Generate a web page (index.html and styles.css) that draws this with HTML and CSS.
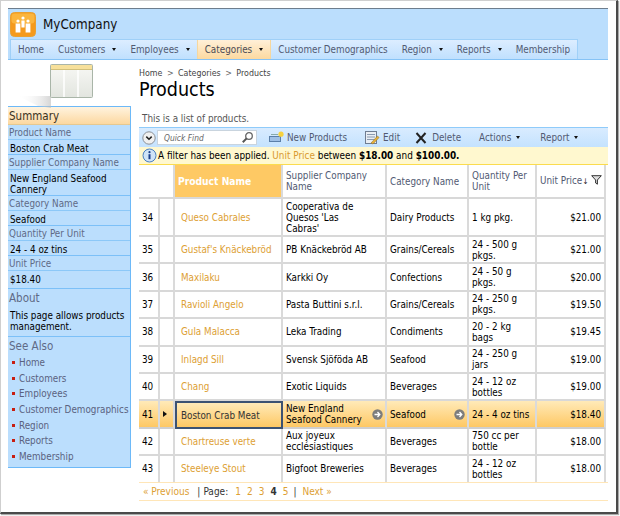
FILE: index.html
```html
<!DOCTYPE html>
<html lang="en">
<head>
<meta charset="utf-8">
<title>Products</title>
<link rel="stylesheet" href="styles.css">
</head>
<body>
<div class="frame">
  <header class="top">
    <div class="brand">
      <span class="logo">
        <svg width="26" height="25" viewBox="0 0 26 25"><rect x="0.5" y="0.5" width="25" height="24" rx="4" fill="#f59a1c" stroke="#e8a033"/><rect x="1.5" y="1.5" width="23" height="10" rx="3" fill="#fbb53e"/><g fill="#fff"><circle cx="8" cy="9" r="1.6"/><rect x="5.6" y="11.5" width="4.8" height="9"/><circle cx="13" cy="6" r="1.6"/><rect x="11.4" y="8.5" width="3.2" height="7"/><circle cx="18" cy="9" r="1.6"/><rect x="15.6" y="11.5" width="4.8" height="9"/></g></svg>
      </span>
      <span class="brand-name">MyCompany</span>
    </div>
    <nav class="menu">
      <span class="mi mi-first">Home</span>
      <span class="mi">Customers<i class="caret"></i></span>
      <span class="mi">Employees<i class="caret"></i></span>
      <span class="mi mi-active">Categories<i class="caret"></i></span>
      <span class="mi">Customer Demographics</span>
      <span class="mi">Region<i class="caret"></i></span>
      <span class="mi">Reports<i class="caret"></i></span>
      <span class="mi">Membership</span>
    </nav>
  </header>
  <div class="columns">
    <aside class="side">
      <div class="hero">
        <svg width="90" height="46" viewBox="0 0 90 46"><defs><linearGradient id="g1" x1="0" y1="0" x2="0" y2="1"><stop offset="0" stop-color="#f8f8f5"/><stop offset="1" stop-color="#e2e5df"/></linearGradient><linearGradient id="g2" x1="0" y1="0" x2="1" y2="0"><stop offset="0" stop-color="#fff" stop-opacity="0"/><stop offset="1" stop-color="#bbb"/></linearGradient></defs><polygon points="10,32 43,32 43,44 30,42" fill="url(#g2)" opacity=".6"/><rect x="42.5" y="0.5" width="42" height="33" rx="1" fill="url(#g1)" stroke="#a9b5a8"/><rect x="43" y="1" width="41" height="4.5" fill="#f7e09a"/><path d="M43 5.5h41" stroke="#d2c07a"/><path d="M56 6v27M70 6v27" stroke="#fff" stroke-width="1.5"/></svg>
      </div>
      <div class="panel">
        <h2 class="panel-title">Summary</h2>
        <div class="f-label f-h1">Product Name</div>
        <div class="f-value">Boston Crab Meat</div>
        <div class="f-label">Supplier Company Name</div>
        <div class="f-value">New England Seafood Cannery</div>
        <div class="f-label">Category Name</div>
        <div class="f-value">Seafood</div>
        <div class="f-label">Quantity Per Unit</div>
        <div class="f-value">24 - 4 oz tins</div>
        <div class="f-label">Unit Price</div>
        <div class="f-value f-last">$18.40</div>
        <h3 class="sec-title">About</h3>
        <p class="about">This page allows products management.</p>
        <h3 class="sec-title">See Also</h3>
        <ul class="links">
          <li>Home</li>
          <li>Customers</li>
          <li>Employees</li>
          <li>Customer Demographics</li>
          <li>Region</li>
          <li>Reports</li>
          <li>Membership</li>
        </ul>
      </div>
    </aside>
    <main class="main">
      <div class="crumbs">Home <span class="sep">&gt;</span> Categories <span class="sep">&gt;</span> Products</div>
      <h1 class="title">Products</h1>
      <p class="desc">This is a list of products.</p>
      <div class="toolbar">
        <span class="round">
          <svg width="14" height="14" viewBox="0 0 14 14"><circle cx="7" cy="7" r="6.2" fill="#f0f0f0" stroke="#8a8f96"/><path d="M4.3 5.6 7 8.3l2.7-2.7" fill="none" stroke="#222" stroke-width="1.5"/></svg>
        </span>
        <span class="qf"><em>Quick Find</em>
          <svg width="13" height="13" viewBox="0 0 13 13"><circle cx="8" cy="5" r="3.3" fill="#fff" stroke="#666" stroke-width="1.3"/><path d="M5.6 7.4 1.8 11.2" stroke="#555" stroke-width="2"/></svg>
        </span>
        <span class="tb tb-new">
          <svg width="15" height="13" viewBox="0 0 15 13"><rect x="0.5" y="5.5" width="11" height="5" fill="#9fc0e6" stroke="#5b7fa8"/><path d="M2 3.5h7" stroke="#8aa" /><circle cx="12" cy="3.2" r="2.6" fill="#f7d23e"/></svg>
          New Products</span>
        <span class="tb tb-edit">
          <svg width="15" height="14" viewBox="0 0 15 14"><rect x="0.5" y="0.5" width="11" height="12" fill="#e9eef4" stroke="#6f7d92"/><path d="M2 3.5h8M2 6h8M2 8.5h8" stroke="#8a9ab0"/><path d="M6 12 12.5 5l1.6 1.5L8 13z" fill="#e8b23a" stroke="#8a6a20" stroke-width=".5"/></svg>
          Edit</span>
        <span class="tb tb-del">
          <svg width="12" height="12" viewBox="0 0 12 12"><path d="M1.5 1 10.5 11M10.5 1 1.5 11" stroke="#222" stroke-width="2"/></svg>
          Delete</span>
        <span class="tb tb-act">Actions<i class="caret"></i></span>
        <span class="tb tb-rep">Report<i class="caret"></i></span>
      </div>
      <div class="filter">
        <svg width="15" height="15" viewBox="0 0 15 15"><circle cx="7.5" cy="7.5" r="6.5" fill="#cfe3f8" stroke="#4a7fc0"/><rect x="6.5" y="6.2" width="2" height="5" fill="#1c3f8a"/><circle cx="7.5" cy="4.2" r="1.1" fill="#1c3f8a"/></svg>
        <span>A filter has been applied. <span class="hl">Unit Price</span> between <b>$18.00</b> and <b>$100.00.</b></span>
      </div>
      <table class="grid">
        <colgroup><col class="c1"><col class="c2"><col class="c3"><col class="c4"><col class="c5"><col class="c6"><col class="c7"></colgroup>
        <thead>
          <tr>
            <th colspan="2"></th>
            <th class="sorted">Product Name</th>
            <th>Supplier Company Name</th>
            <th>Category Name</th>
            <th>Quantity Per Unit</th>
            <th class="th-price">Unit Price<span class="down">↓</span><svg class="funnel" width="11" height="10" viewBox="0 0 11 10"><path d="M0.7 0.7h9.6L6.4 5v4.2L4.6 8V5z" fill="#ddd" stroke="#333"/></svg></th>
          </tr>
        </thead>
        <tbody>
          <tr class="r3"><td class="num">34</td><td></td><td class="pn">Queso Cabrales</td><td class="sup">Cooperativa de Quesos 'Las Cabras'</td><td>Dairy Products</td><td>1 kg pkg.</td><td class="pr">$21.00</td></tr>
          <tr><td class="num">35</td><td></td><td class="pn">Gustaf's Knäckebröd</td><td class="sup">PB Knäckebröd AB</td><td>Grains/Cereals</td><td>24 - 500 g pkgs.</td><td class="pr">$21.00</td></tr>
          <tr><td class="num">36</td><td></td><td class="pn">Maxilaku</td><td class="sup">Karkki Oy</td><td>Confections</td><td>24 - 50 g pkgs.</td><td class="pr">$20.00</td></tr>
          <tr><td class="num">37</td><td></td><td class="pn">Ravioli Angelo</td><td class="sup">Pasta Buttini s.r.l.</td><td>Grains/Cereals</td><td>24 - 250 g pkgs.</td><td class="pr">$19.50</td></tr>
          <tr><td class="num">38</td><td></td><td class="pn">Gula Malacca</td><td class="sup">Leka Trading</td><td>Condiments</td><td>20 - 2 kg bags</td><td class="pr">$19.45</td></tr>
          <tr><td class="num">39</td><td></td><td class="pn">Inlagd Sill</td><td class="sup">Svensk Sjöföda AB</td><td>Seafood</td><td>24 - 250 g jars</td><td class="pr">$19.00</td></tr>
          <tr><td class="num">40</td><td></td><td class="pn">Chang</td><td class="sup">Exotic Liquids</td><td>Beverages</td><td>24 - 12 oz bottles</td><td class="pr">$19.00</td></tr>
          <tr class="sel"><td class="num">41</td><td class="mark"><i class="tri"></i></td><td class="pn cur">Boston Crab Meat</td>
            <td class="sup go">New England Seafood Cannery<svg class="goi" width="11" height="11" viewBox="0 0 11 11"><circle cx="5.5" cy="5.5" r="5.2" fill="#7d7d7d"/><path d="M2.5 5.5h5M5.5 3l2.3 2.5L5.5 8" fill="none" stroke="#fff" stroke-width="1.3"/></svg></td>
            <td class="go">Seafood<svg class="goi" width="11" height="11" viewBox="0 0 11 11"><circle cx="5.5" cy="5.5" r="5.2" fill="#7d7d7d"/><path d="M2.5 5.5h5M5.5 3l2.3 2.5L5.5 8" fill="none" stroke="#fff" stroke-width="1.3"/></svg></td>
            <td>24 - 4 oz tins</td><td class="pr">$18.40</td></tr>
          <tr><td class="num">42</td><td></td><td class="pn">Chartreuse verte</td><td class="sup">Aux joyeux ecclésiastiques</td><td>Beverages</td><td>750 cc per bottle</td><td class="pr">$18.00</td></tr>
          <tr class="last"><td class="num">43</td><td></td><td class="pn">Steeleye Stout</td><td class="sup">Bigfoot Breweries</td><td>Beverages</td><td>24 - 12 oz bottles</td><td class="pr">$18.00</td></tr>
        </tbody>
      </table>
      <div class="pager">
        <span class="pl">« Previous</span><span class="bar">|</span><span class="pg">Page:</span>
        <span class="pl n">1</span><span class="pl n">2</span><span class="pl n">3</span><b class="n">4</b><span class="pl n">5</span>
        <span class="bar bar2">|</span><span class="pl">Next »</span>
      </div>
    </main>
  </div>
</div>
</body>
</html>
```
FILE: styles.css
```css
* { box-sizing: border-box; }
html, body { margin: 0; padding: 0; background: #fff; }
body { width: 620px; height: 516px; overflow: hidden; font-family: "DejaVu Sans Condensed", "DejaVu Sans", sans-serif; font-stretch: condensed; font-size: 9.8px; color: #000; }

.frame {
  width: 618px; height: 514px;
  border-top: 1px solid #cfcfcf; border-left: 1px solid #cfcfcf;
  border-right: 2px solid #4a4a4a; border-bottom: 2px solid #4a4a4a;
  box-shadow: 1px 1px 1px #aaa;
  padding: 7px 8px 0 7px;
  background: #fff;
}

/* header */
.top { height: 52px; background: #bbdefd; border-top: 1px solid #6d7d8d; border-bottom: 1px solid #86c3f6; }
.brand { height: 30px; display: flex; align-items: center; padding-left: 2px; }
.logo { display: flex; width: 26px; }
.brand-name { margin-left: 7px; font-size: 13.3px; color: #111; }
.menu {
  width: 568px; height: 20px; margin-left: 2px; display: flex; align-items: stretch;
  background: linear-gradient(#dcedff, #c0e0fe);
  border: 1px solid #9fd0f8; border-bottom: 0;
  color: #515a72;
}
.mi { display: flex; align-items: center; padding: 0 7px; white-space: nowrap; }
.mi-active { background: linear-gradient(#fff0d8, #fcd9a0); border-left: 1px solid #f6d79e; border-right: 1px solid #f6d79e; color: #4a4a55; }
.caret { display: inline-block; width: 0; height: 0; margin-left: 7px; border-style: solid; border-width: 3px 2.5px 0; border-color: #111 transparent transparent; }

.columns { display: flex; }
.side { width: 123px; flex: none; }
.hero { height: 46px; padding: 4px 0 0 0; display: flex; }
.panel { background: #bbdefd; border: 1px solid #6db9f8; border-left-width: 0; height: 362px; }
.panel-title { margin: 0; height: 18px; font-size: 11.5px; font-weight: normal; padding: 1px 0 0 1px; line-height: 16px; color: #3a3222; background: linear-gradient(#fff3df, #fcd8a0); border-bottom: 1px solid #e5c890; }
.f-label { height: 15px; padding: 1px 0 0 1px; line-height: 14px; color: #5f6a86; border-bottom: 1px solid #8cc8f8; white-space: nowrap; }
.f-value { min-height: 15px; padding: 3px 0 0 2px; line-height: 11px; color: #000; border-bottom: 1px solid #7cc0f8; }
.f-last { min-height: 18px; }
.sec-title { margin: 0; font-size: 11.5px; font-weight: normal; color: #5f6a86; height: 18px; padding: 1px 0 0 1px; line-height: 17px; }
.about { margin: 0; height: 30px; padding: 3px 0 0 2px; line-height: 11px; border-bottom: 1px solid #7cc0f8; }
.links { margin: 0; padding: 0; list-style: none; color: #5a6280; }
.links li { height: 15.67px; line-height: 15.67px; padding-left: 11px; position: relative; white-space: nowrap; }
.links li::before { content: ""; position: absolute; left: 4px; top: 6px; width: 3px; height: 3px; background: #c81e10; }

/* main */
.main { width: 469px; margin-left: 8px; flex: none; }
.crumbs { height: 12px; margin-top: 7px; font-size: 8.8px; line-height: 12px; color: #444; white-space: nowrap; }
.sep { color: #666; margin: 0 2px; }
.title { margin: 0; height: 22px; font-size: 19.5px; line-height: 22px; font-weight: normal; color: #000; }
.desc { margin: 0; height: 26px; padding: 11px 0 0 3px; line-height: 14px; color: #555; }

.toolbar { height: 20px; display: flex; align-items: center; background: linear-gradient(#d9ecff, #c4e2fe); border-top: 1px solid #8fcbfa; color: #515a72; padding-left: 3px; white-space: nowrap; }
.round { display: flex; width: 14px; }
.qf { display: flex; align-items: center; justify-content: space-between; width: 100px; height: 15px; margin-left: 1px; background: #fff; border: 1px solid #c9d4de; padding: 0 2px 0 6px; }
.qf em { color: #666; font-size: 8.4px; }
.tb { display: flex; align-items: center; }
.tb svg { margin-right: 3px; }
.tb-new { margin-left: 12px; }
.tb-edit { margin-left: 18px; }
.tb-del { margin-left: 15px; }
.tb-del svg { margin-right: 5px; }
.tb-act { margin-left: 18px; }
.tb-rep { margin-left: 20px; }
.tb .caret { margin-left: 5px; }

.filter { height: 18px; display: flex; align-items: center; gap: 1px; padding-left: 3px; font-size: 9.9px; background: #fff8cf; border-bottom: 1px solid #fbdc4e; white-space: nowrap; }
.hl { color: #d99a30; }

.grid { width: 467px; table-layout: fixed; border-collapse: separate; border-spacing: 0; line-height: 11px; }
.c1 { width: 21px; } .c2 { width: 15px; } .c3 { width: 108px; } .c4 { width: 104px; } .c5 { width: 82px; } .c6 { width: 68px; } .c7 { width: 69px; }
.grid th, .grid td { padding: 0 3px; vertical-align: middle; text-align: left; font-weight: normal; border-right: 2px solid #dadada; border-bottom: 2px solid #d8d8d8; }
.grid th { height: 34px; color: #515a72; }
.grid td { height: 27.4px; }
.grid .r3 td { height: 38px; }
.grid .last td { height: 25.4px; border-bottom: 0; }
.grid th.sorted { background: #fec964; color: #fff; font-weight: bold; font-size: 10.2px; }
.grid td.sup { padding-right: 14px; }
.grid .th-price { white-space: nowrap; padding-right: 0; }
.down { font-size: 8px; color: #222; }
.funnel { margin-left: 3px; vertical-align: -1px; }
.grid td.pn { color: #dda033; padding-left: 6px; }
.grid td.pr { text-align: right; }
.sel td { background: linear-gradient(#ffeab8, #fec864); }
.grid .sel td.pn.cur { color: #333; border: 2px solid #3c5272; padding-left: 4px; }
.grid .sel td { border-bottom-color: #cfcfcf; }
.mark { text-align: center; }
.tri { display: inline-block; width: 0; height: 0; border-style: solid; border-width: 3.5px 0 3.5px 4px; border-color: transparent transparent transparent #111; vertical-align: 1px; }
.go { position: relative; }
.goi { position: absolute; right: 2px; top: 8px; }

.pager { display: flex; align-items: center; width: 469px; height: 19px; padding-left: 4px; font-size: 10px; background: #fff; border-top: 1px solid #ffe6b8; border-bottom: 1px solid #ffe6b8; white-space: nowrap; color: #333; }
.pl { color: #dda033; }
.bar { margin-left: 8px; }
.pg { margin-left: 3px; }
.n { margin-left: 6px; }
.pg + .n { margin-left: 7px; }
.bar2 { margin-left: 5px; }
.bar2 + .pl { margin-left: 6px; }
```
